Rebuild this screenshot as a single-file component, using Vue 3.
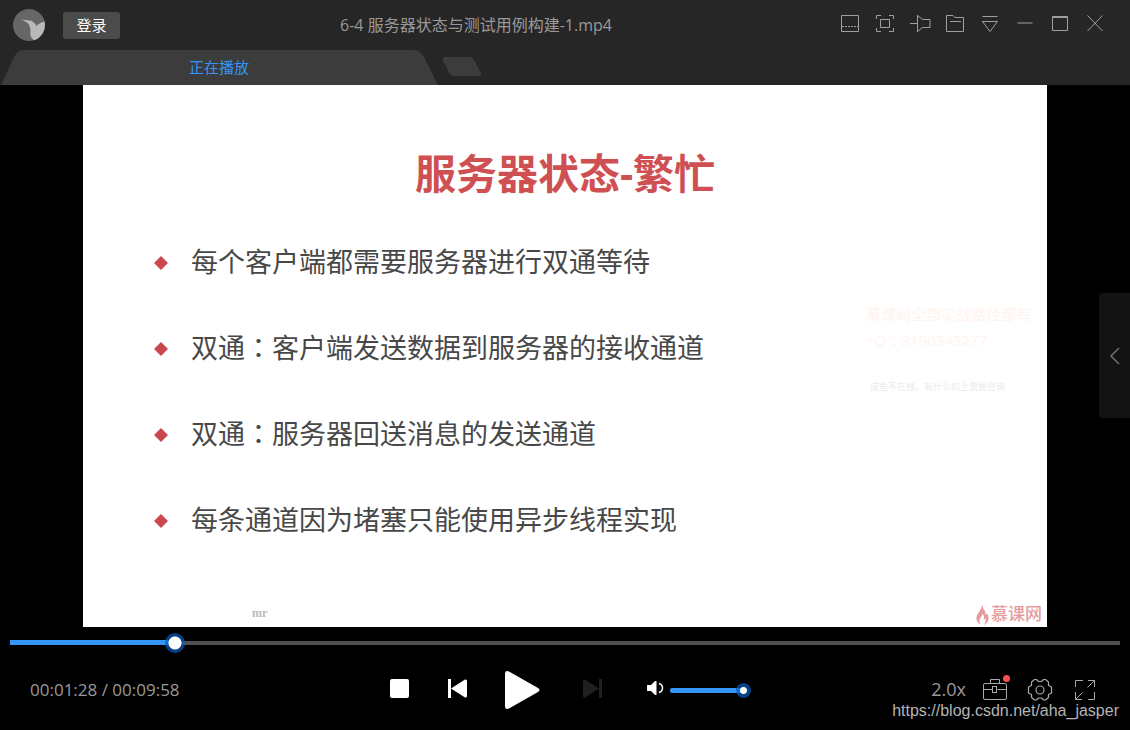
<script setup>
import { ref, computed } from 'vue'

const duration = 598
const position = ref(85)
const volume = ref(100)
const played = computed(() => `calc(10px + (100% - 20px) * ${position.value / duration})`)
const loud = computed(() => `calc(8px + (100% - 15px) * ${volume.value / 100})`)

const windowActions = [
  { label: '迷你模式', path: 'M9.5 15.5h17v16h-17z M10 26.5h2m1 0h2m1 0h2m1 0h2m1 0h2m1 0h1.5' },
  { label: '自适应画面', path: 'M9.5 19v-3.5H14M22 15.5h4.5V19M26.5 28v3.5H22M14 31.5H9.5V28M13.5 19.5h9v8h-9z' },
  { label: '置顶', path: 'M8 23.5h7M15.5 15v17M15.5 15.5l5 4h7.5v8h-7.5l-5 4' },
  { label: '打开文件', path: 'M9.5 31.5v-16h6.5l2 2h8.5v14zM13 21.5h11' },
  { label: '主菜单', path: 'M10.5 16.5h15M10.5 21.5h15L18 31.5z' },
  { label: '最小化', path: 'M10.5 23h15' },
  { label: '最大化', path: 'M10.5 16.5h15v14h-15zM10 17.5h15' },
  { label: '关闭', path: 'M10.5 15.5l15 15.5M25.5 15.5l-15 15.5' }
]
const points = [
  { text: '每个客户端都需要服务器进行双通等待' },
  { term: '双通', text: '客户端发送数据到服务器的接收通道' },
  { term: '双通', text: '服务器回送消息的发送通道' },
  { text: '每条通道因为堵塞只能使用异步线程实现' }
]
</script>

<template>
  <div class="player">
    <header class="titlebar">
      <svg class="avatar" width="32" height="32" viewBox="0 0 32 32" aria-hidden="true">
        <circle cx="16" cy="16" r="16" fill="#666" />
        <path d="M8 10.500Q13 11 16 11.500Q20 11 23.500 17Q26 14 31.500 12.500A16 16 0 0 1 21 31.300Q16.500 28 17.500 23Q17.500 16 14 13.500Q11 11.500 8 10.500Z" fill="#b9b9b9" />
      </svg>
      <button class="login" type="button">登录</button>
      <h1 class="filename">6-4 服务器状态与测试用例构建-1.mp4</h1>
      <div class="window-actions">
        <button v-for="a in windowActions" :key="a.label" type="button" :aria-label="a.label">
          <svg width="35" height="48" viewBox="0 0 35 48"><path :d="a.path" fill="none" stroke="#a0a0a0" /></svg>
        </button>
      </div>
    </header>

    <nav class="tabs">
      <button class="tab" type="button">
        <svg class="tab-shape" viewBox="0 0 438 35" preserveAspectRatio="none" aria-hidden="true">
          <path d="M1 35L14 7Q18 0 24 0H414Q420 0 424 7L438 35Z" fill="#3c3c3c" />
        </svg>
        <span>正在播放</span>
      </button>
      <button class="new-tab" type="button" aria-label="新标签">
        <svg width="40" height="20" viewBox="0 0 40 20">
          <path d="M3 0H28Q30 0 32 3L39 16Q40 19 37 19H12Q9 19 8 17L1 4Q0 0 3 0Z" fill="#3c3c3c" />
        </svg>
      </button>
    </nav>

    <main class="stage">
      <section class="slide">
        <h2>服务器状态-繁忙</h2>
        <ul>
          <li v-for="p in points" :key="p.text">
            <svg width="14" height="18" viewBox="0 0 14 18" aria-hidden="true"><path d="M7 3l7 7-7 7-7-7z" fill="#c9484e" /></svg>
            <p><template v-if="p.term">{{ p.term }}<span class="colon">：</span></template>{{ p.text }}</p>
          </li>
        </ul>
        <p class="promo">慕课网全部实战路径都有<br />+Q<span class="colon">：</span>3190343277</p>
        <p class="note">咸鱼不在线，有什么扣上需要咨询</p>
        <span class="initials">mr</span>
        <div class="brand">
          <svg width="13" height="21" viewBox="0 0 13 21" aria-hidden="true">
            <path d="M7 0Q5.500 4 3 8Q-1 13 1 17Q2 19.500 4.500 20.500Q2.500 16 4.500 13.500Q6.500 12 6.500 9.500Q9 13 7.500 16Q9 15.500 9.500 14Q10.500 18 7.500 21Q12 19 12.500 15Q13 11 10.500 9Q10.500 11 9.500 11Q10 7 7.500 5Q6.500 3 7 0Z" fill="#e59c9e" />
          </svg>
          慕课网
        </div>
      </section>
      <button class="drawer" type="button" aria-label="展开播放列表">
        <svg width="12" height="18" viewBox="0 0 12 18"><path d="M10 1L2 9l8 8" fill="none" stroke="#707070" stroke-width="1.5" /></svg>
      </button>
    </main>

    <footer class="deck">
      <div class="progress">
        <input v-model.number="position" class="seek" type="range" min="0" :max="duration" aria-label="播放进度" :style="{ '--fill': played }" />
      </div>
      <div class="controls">
        <div class="time">00:01:28 / 00:09:58</div>
        <div class="transport">
          <button type="button" aria-label="停止">
            <svg width="21" height="42" viewBox="0 0 21 42"><rect x="1" y="11" width="19" height="19" rx="2" fill="#fff" /></svg>
          </button>
          <button class="prev" type="button" aria-label="上一个">
            <svg width="19" height="42" viewBox="0 0 19 42" fill="#fff"><path d="M0 11h3v19H0z" /><path d="M3 20.500L17 11.500Q19 11 19 13V28Q19 30 17 29.500Z" /></svg>
          </button>
          <button class="play" type="button" aria-label="播放">
            <svg width="36" height="42" viewBox="0 0 36 42"><path d="M1 6Q1 2 5 3.500L34 20Q37 22 34 24L5 40.500Q1 42 1 38Z" fill="#fff" /></svg>
          </button>
          <button class="next" type="button" aria-label="下一个">
            <svg width="20" height="42" viewBox="0 0 20 42" fill="#202020"><path d="M16 11h3v19h-3z" /><path d="M16 20.500L2 11.500Q0 11 0 13V28Q0 30 2 29.500Z" /></svg>
          </button>
          <button class="mute" type="button" aria-label="静音">
            <svg width="17" height="42" viewBox="0 0 17 42"><path d="M0 17h4l4-4h1.500v14H8l-4-4H0z" fill="#fff" /><path d="M12 15.500q3.500 1 3.500 4.500t-3.500 4.500" fill="none" stroke="#fff" stroke-width="1.5" /></svg>
          </button>
          <input v-model.number="volume" class="volume" type="range" min="0" max="100" aria-label="音量" :style="{ '--fill': loud }" />
        </div>
        <div class="tools">
          <button class="speed" type="button">2.0x</button>
          <button type="button" aria-label="工具箱">
            <svg width="45" height="42" viewBox="0 0 45 42" fill="none" stroke="#a8a8a8">
              <rect x="11.5" y="15.5" width="23" height="16" rx="1.5" /><path d="M18.500 15v-3.500h9V15M12 21.500h8.500m5 0H34" /><rect x="20.5" y="18.5" width="4" height="6" />
              <circle cx="34.5" cy="10.5" r="3.5" fill="#ff4d4f" stroke="none" />
            </svg>
          </button>
          <button type="button" aria-label="设置">
            <svg width="45" height="42" viewBox="0 0 45 42" fill="none" stroke="#a8a8a8" stroke-width="1.2">
              <path d="M17.500 11.500h2l2 2h3l2-2h2l3 2.500v3.500l3 1.500v6l-3 1.500v3l-3 2.500h-2l-2-2h-3l-2 2h-2l-3-2.500v-3l-3-1.500v-6l3-1.500v-3.500z" stroke-linejoin="round" />
              <circle cx="23" cy="22" r="4" />
            </svg>
          </button>
          <button type="button" aria-label="全屏">
            <svg width="45" height="42" viewBox="0 0 45 42" fill="none" stroke="#a8a8a8">
              <path d="M21 12.500h-7.500V19M32.500 24v7.500H26M26 12.500h6.500V19M32.500 12.500l-7 7M13.500 24v7.500H20M13.500 31.500l7-7" />
            </svg>
          </button>
        </div>
      </div>
      <a class="source" href="https://blog.csdn.net/aha_jasper">https://blog.csdn.net/aha_jasper</a>
    </footer>
  </div>
</template>

<style>
body {
  margin: 0;
  background: #000;
}
</style>

<style scoped>
.player {
  display: flex;
  flex-direction: column;
  min-height: 100vh;
  background: #000;
  color: #999;
  font-family: "Open Sans", "Noto Sans CJK SC", sans-serif;
}
button {
  padding: 0;
  border: 0;
  background: none;
  color: inherit;
  font: inherit;
}
svg {
  display: block;
}
.titlebar {
  display: flex;
  align-items: center;
  height: 50px;
  padding: 0 18px 0 13px;
  background: #262626;
}
.login {
  width: 57px;
  height: 27px;
  margin-left: 18px;
  border-radius: 3px;
  background: #4b4b4b;
  color: #fff;
  font-size: 15px;
  line-height: 27px;
}
.filename {
  flex: 1;
  margin: 0;
  font-size: 16px;
  font-weight: 400;
  line-height: 24px;
  text-align: center;
}
.window-actions {
  display: flex;
  align-self: flex-start;
}
.tabs {
  display: flex;
  height: 35px;
  background: #262626;
}
.tab {
  position: relative;
  width: 438px;
  color: #3296fa;
  font-size: 15px;
  line-height: 35px;
}
.tab-shape {
  position: absolute;
  inset: 0;
  width: 100%;
  height: 100%;
}
.tab span {
  position: relative;
}
.new-tab {
  align-self: flex-start;
  margin: 7px 0 0 4px;
}
.stage {
  position: relative;
  display: flex;
  flex: 1;
  padding: 0 83px;
}
.slide {
  position: relative;
  flex: 1;
  padding-top: 58px;
  background: #fff;
}
h2 {
  margin: 0;
  color: #cf5053;
  font-size: 41px;
  font-weight: 700;
  line-height: 60px;
  text-align: center;
}
ul {
  margin: 16px 0 0;
  padding: 0 0 0 71px;
  list-style: none;
}
li {
  display: flex;
  align-items: center;
  gap: 23px;
  color: #484848;
  font-size: 27px;
  line-height: 86px;
}
li p {
  margin: 0;
}
.colon {
  font-family: "Noto Sans CJK TC", sans-serif;
  line-height: 1;
}
.promo,
.note,
.initials,
.brand {
  position: absolute;
  margin: 0;
}
.promo {
  top: 216px;
  right: 16px;
  color: #fff3ee;
  font-size: 15px;
  line-height: 26px;
}
.note {
  top: 294px;
  right: 42px;
  color: #ebebeb;
  font-size: 9px;
  line-height: 16px;
}
.initials {
  bottom: 6px;
  left: 169px;
  color: #bbb;
  font: 700 12px/16px "Liberation Serif", serif;
}
.brand {
  right: 5px;
  bottom: 2px;
  display: flex;
  align-items: center;
  gap: 2px;
  color: #e59c9e;
  font-size: 17px;
  font-weight: 500;
  line-height: 22px;
}
.drawer {
  position: absolute;
  top: 50%;
  right: 0;
  display: grid;
  place-items: center;
  width: 31px;
  height: 125px;
  margin-top: -63px;
  border-radius: 4px 0 0 4px;
  background: #131313;
}
.deck {
  position: relative;
  padding-bottom: 11px;
}
.progress {
  display: flex;
  padding: 5px 10px 6px;
}
input[type="range"] {
  width: 100%;
  height: 21px;
  margin: 0;
  background: none;
  -webkit-appearance: none;
  appearance: none;
}
.seek::-webkit-slider-runnable-track {
  height: 5px;
  background:
    linear-gradient(#3296fa, #3296fa) 0 0 / var(--fill) 5px no-repeat,
    linear-gradient(#505050, #505050) 0 1px / 100% 4px no-repeat;
}
.seek::-webkit-slider-thumb {
  width: 20px;
  height: 20px;
  margin-top: -7px;
  border-radius: 50%;
  background: radial-gradient(circle, #fff 6px, rgba(10, 91, 190, 0.7) 7px);
  -webkit-appearance: none;
}
input.volume {
  width: 81px;
  margin: 2px 0 0 6px;
}
.volume::-webkit-slider-runnable-track {
  height: 5px;
  border-radius: 2px;
  background: linear-gradient(#3296fa, #3296fa) 0 0 / var(--fill) 5px no-repeat;
}
.volume::-webkit-slider-thumb {
  width: 15px;
  height: 15px;
  margin-top: -5px;
  border-radius: 50%;
  background: radial-gradient(circle, #fff 3px, rgba(10, 91, 190, 0.7) 4px);
  -webkit-appearance: none;
}
.controls {
  display: grid;
  grid-template-columns: 1fr auto 1fr;
  align-items: center;
  height: 60px;
  padding: 0 20px 0 30px;
}
.time {
  padding-top: 2px;
  font-size: 17px;
  line-height: 24px;
}
.transport,
.tools {
  display: flex;
  align-items: center;
}
.prev {
  margin-left: 38px;
}
.play {
  margin-left: 37px;
}
.next {
  margin-left: 43px;
}
.mute {
  margin-left: 44px;
}
.tools {
  justify-content: flex-end;
  padding-right: 3px;
}
.speed {
  margin-right: 6px;
  font-size: 18px;
}
.source {
  position: absolute;
  right: 11px;
  bottom: 9px;
  color: #b4b4b4;
  font: 16px/20px "Liberation Sans", sans-serif;
  text-decoration: none;
}
</style>
